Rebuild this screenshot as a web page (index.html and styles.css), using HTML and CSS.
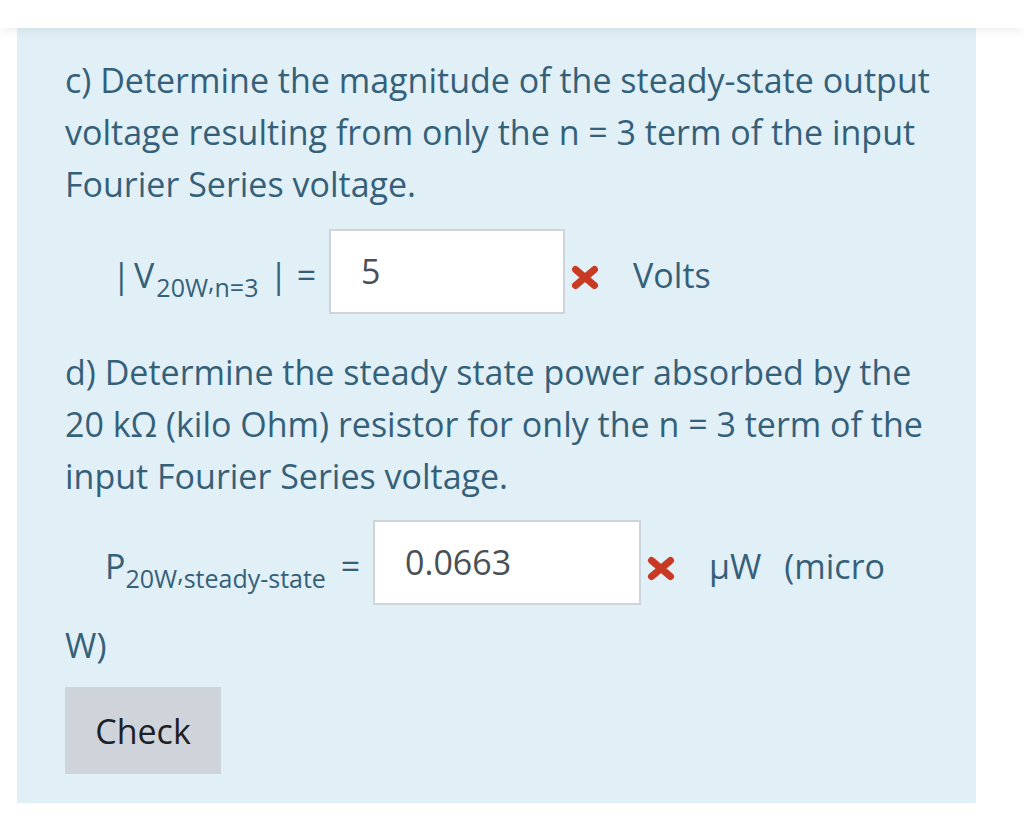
FILE: index.html
```html
<!DOCTYPE html>
<html lang="en">
<head>
<meta charset="utf-8">
<title>Question</title>
<link rel="stylesheet" href="styles.css">
</head>
<body>
<header class="topbar"></header>
<main class="panel">
  <p class="qtext">c) Determine the magnitude of the steady-state output voltage resulting from only the n = 3 term of the input Fourier Series voltage.</p>
  <div class="answer answer-c">|&#8202;V<sub class="sub sub-c">20W<span class="comma">,</span>n=3</sub> | = <span class="field field-c">5</span><svg class="wrong" viewBox="0 0 30 25" aria-hidden="true"><path d="M5.5 4.5 L24.5 20.5 M24.5 4.5 L5.5 20.5" stroke="#c93a24" stroke-width="7" stroke-linecap="round"/></svg><span class="unit">Volts</span></div>
  <p class="qtext">d) Determine the steady state power absorbed by the 20 kΩ (kilo Ohm) resistor for only the n = 3 term of the input Fourier Series voltage.</p>
  <div class="answer answer-d">P<sub class="sub sub-d">20W<span class="comma">,</span>steady-state</sub> = <span class="field field-d">0.0663</span><svg class="wrong" viewBox="0 0 30 25" aria-hidden="true"><path d="M5.5 4.5 L24.5 20.5 M24.5 4.5 L5.5 20.5" stroke="#c93a24" stroke-width="7" stroke-linecap="round"/></svg><span class="unit unit-mu">µW</span> (micro<br>W)</div>
  <button class="check" type="button">Check</button>
</main>
</body>
</html>
```

FILE: styles.css
```css
html, body {
  margin: 0;
  background: #ffffff;
}
.topbar {
  height: 28px;
  background: #ffffff;
  box-shadow: 0 3px 10px rgba(0, 0, 0, 0.07);
  position: relative;
  z-index: 2;
}
.panel {
  margin-left: 17px;
  width: 959px;
  box-sizing: border-box;
  padding: 26px 46px 29px 48px;
  background: #e1f0f7;
  color: #35607a;
  font-family: "Open Sans", "Noto Sans", sans-serif;
  font-size: 34px;
  line-height: 52px;
}
.qtext {
  margin: 0;
}
.answer {
  margin: 0;
}
.answer-c {
  text-indent: 47px;
  margin-top: 19px;
  margin-bottom: 18px;
}
.answer-d {
  text-indent: 40px;
  margin-top: 18px;
}
.sub {
  font-size: 25px;
  vertical-align: -9px;
  line-height: 0;
}
.sub-c {
  margin: 0 2px 0 2px;
}
.sub-d {
  margin-right: 6px;
}
.comma {
  display: inline-block;
  text-indent: 0;
  transform: translateY(-6px);
}
.field {
  display: inline-block;
  vertical-align: middle;
  text-indent: 0;
  box-sizing: border-box;
  height: 85px;
  line-height: 81px;
  background: #ffffff;
  border: 2px solid #ced4da;
  color: #495057;
  padding-left: 30px;
  margin: 0 0 14px 4px;
}
.field-c { width: 236px; }
.field-d { width: 268px; }
.wrong {
  width: 30px;
  height: 25px;
  vertical-align: -2px;
  margin: 0 33px 0 5px;
}
.unit-mu {
  margin-right: 14px;
}
.check {
  display: block;
  margin-top: 16px;
  width: 156px;
  height: 87px;
  border: 0;
  background: #ced4da;
  color: #1d2125;
  font-family: inherit;
  font-size: 34px;
  padding: 0;
}
```
